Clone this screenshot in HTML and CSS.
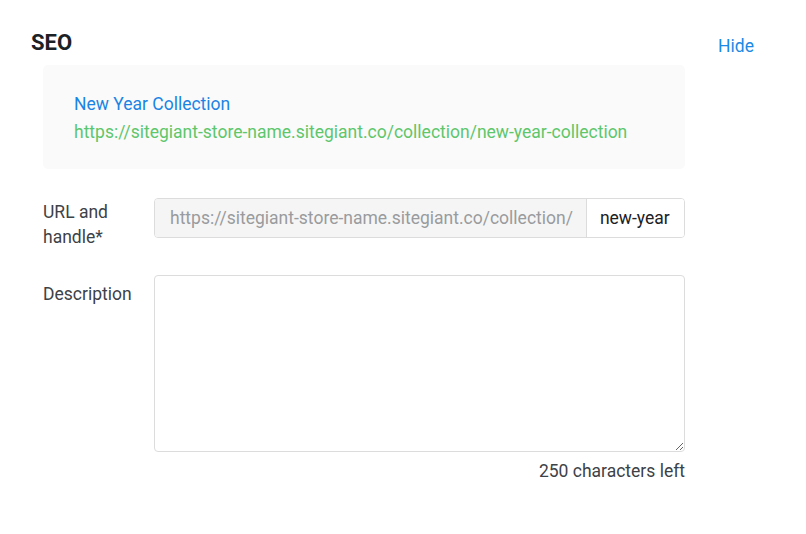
FILE: index.html
```html
<!DOCTYPE html>
<html lang="en">
<head>
<meta charset="utf-8">
<title>SEO</title>
<link rel="stylesheet" href="styles.css">
</head>
<body>
<main class="page">
  <header class="head">
    <h2 class="title">SEO</h2>
    <a class="hide" href="#">Hide</a>
  </header>
  <section class="body">
    <div class="preview">
      <div class="preview-title">New Year Collection</div>
      <div class="preview-url">https://sitegiant-store-name.sitegiant.co/collection/new-year-collection</div>
    </div>
    <div class="row row-url">
      <label class="label label-url">URL and<br>handle*</label>
      <div class="group">
        <span class="prefix">https://sitegiant-store-name.sitegiant.co/collection/</span>
        <input class="handle" type="text" value="new-year">
      </div>
    </div>
    <div class="row row-desc">
      <label class="label label-desc">Description</label>
      <div class="field">
        <textarea class="desc"></textarea>
        <div class="count">250 characters left</div>
      </div>
    </div>
  </section>
</main>
</body>
</html>
```
FILE: styles.css
```css
* { box-sizing: border-box; }
html, body { margin: 0; background: #fff; }
body {
  font-family: Roboto, "Liberation Sans", Arial, sans-serif;
  font-size: 17.5px;
  color: #3d4247;
}
.page {
  padding: 30px 0 0 31px;
  width: 754px;
}
.head {
  display: flex;
  justify-content: space-between;
  align-items: flex-start;
  height: 26px;
}
.title {
  margin: 0;
  font-size: 22px;
  line-height: 26px;
  font-weight: 700;
  color: #1c2126;
}
.hide {
  margin-top: 5px;
  font-size: 17.5px;
  line-height: 22px;
  color: #1a8ae6;
  text-decoration: none;
}
.body {
  margin: 9px 0 0 12px;
  width: 642px;
}
.preview {
  background: #fafafa;
  border-radius: 5px;
  padding: 25px 31px 23px;
  line-height: 28px;
}
.preview-title { color: #1a84e4; }
.preview-url { color: #5ec66b; }
.row {
  display: flex;
  align-items: flex-start;
}
.row-url { margin-top: 29px; }
.row-desc { margin-top: 25px; }
.label {
  flex: 0 0 111px;
  line-height: 25px;
  color: #3d4247;
}
.label-url { padding-top: 2px; }
.label-desc { padding-top: 7px; }
.group {
  flex: 1;
  display: flex;
  height: 40px;
  border: 1px solid #dcdcdc;
  border-radius: 4px;
  overflow: hidden;
}
.prefix {
  flex: 0 0 auto;
  background: #f5f5f5;
  color: #999b9e;
  border-right: 1px solid #dcdcdc;
  padding: 0 13px 0 15px;
  line-height: 38px;
  white-space: nowrap;
}
.handle {
  flex: 1;
  min-width: 0;
  border: 0;
  outline: 0;
  padding: 0 0 0 13px;
  font: inherit;
  color: #1c2126;
  background: #fff;
}
.field { flex: 1; }
.desc {
  display: block;
  width: 100%;
  height: 177px;
  border: 1px solid #dcdcdc;
  border-radius: 4px;
  font: inherit;
  resize: vertical;
  outline: 0;
}
.count {
  margin-top: 7px;
  text-align: right;
  line-height: 25px;
  color: #3d4247;
}
```
